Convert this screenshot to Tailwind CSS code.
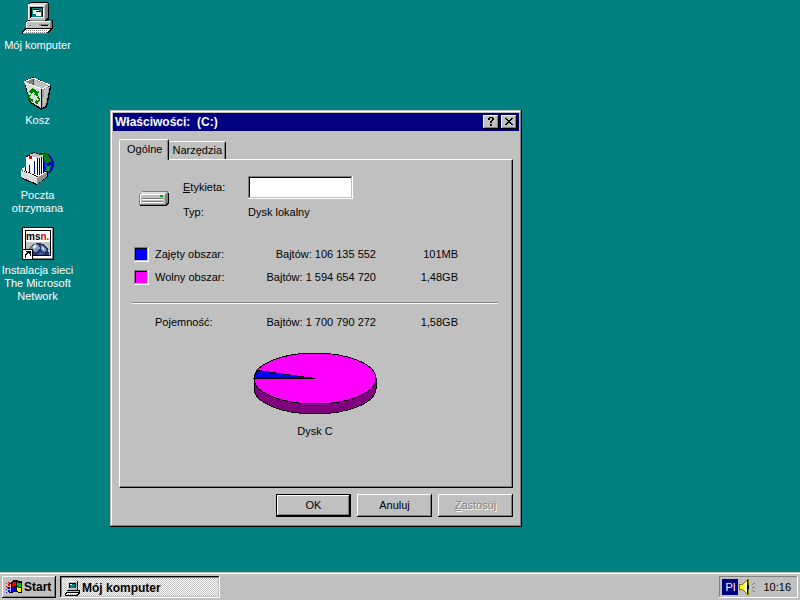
<!DOCTYPE html>
<html lang="pl">
<head>
  <meta charset="UTF-8">
  <meta name="viewport" content="width=device-width, initial-scale=1.0">
  <title>Właściwości: (C:)</title>
  <script src="https://cdn.jsdelivr.net/npm/@tailwindcss/browser@4"></script>
</head>
<body class="relative flex min-h-screen flex-col overflow-hidden bg-[#008080] font-['Liberation_Sans',Arial,sans-serif] text-[11px] leading-[13px] text-black">

  <!-- Desktop icons -->
  <main class="flex-1">
    <nav class="flex w-[75px] flex-col pt-[2px] text-center text-white">
      <a href="#" class="flex min-h-[75px] flex-col items-center gap-[4px]">
        <svg width="32" height="33" viewBox="0 0 32 33" shape-rendering="crispEdges" aria-hidden="true">
          <path d="M8 0h18v1h1v17h-2v1H6V2h1V1h1z" fill="#000"/>
          <path d="M8 1h17l-2 2H6V2h1z" fill="#dcdcdc"/>
          <path d="M6 3h17v15H6z" fill="#c0c0c0"/>
          <path d="M6 3h1v15H6zM6 3h17v1H6z" fill="#fff"/>
          <path d="M23 3l3-2v15l-3 2z" fill="#808080"/>
          <path d="M8 5h13v11H8z" fill="#000"/>
          <path d="M9 15h12V6h1v10H9z" fill="#fff"/>
          <path d="M10 6h10v9H10z" fill="#008080"/>
          <path d="M11 7h6v5h-6zM14 10h5v4h-5z" fill="#fff"/>
          <path d="M11 7h6v1h-6zM14 9h5v1h-5z" fill="#000080"/>
          <path d="M8 18h15v1H8z" fill="#808080"/>
          <path d="M4 19h26v-1h1v8l-2 2H4z" fill="#000"/>
          <path d="M5 20h23v7H5z" fill="#c0c0c0"/>
          <path d="M5 19h24v1H5v7H4v-7z" fill="#fff"/>
          <path d="M28 20h2v5l-2 2z" fill="#808080"/>
          <path d="M7 23h2v1H7z" fill="#00c000"/>
          <path d="M17 22h10v1H17z" fill="#808080"/>
          <path d="M19 23h7v1h-7z" fill="#000"/>
          <path d="M4 26h25v2l-3 4H0v-3z" fill="#000"/>
          <path d="M4 27h24l-3 4H1z" fill="#fff"/>
          <path d="M1 31h25v1H1z" fill="#808080"/>
          <path d="M4 28.500h22M4 30.500h21" stroke="#808080" stroke-dasharray="1 1"/>
        </svg>
        <span>Mój komputer</span>
      </a>
      <a href="#" class="flex min-h-[75px] flex-col items-center gap-[4px]">
        <svg width="32" height="33" viewBox="0 0 32 33" shape-rendering="crispEdges" aria-hidden="true">
          <path d="M2 4L11 0l18 8v3l-4 19-6 3-12-8z" fill="#000"/>
          <path d="M3 5l8-4 17 7-8 4z" fill="#808080"/>
          <path d="M11 2v7l9 3 6-4z" fill="#c0c0c0"/>
          <path d="M11 1v7" stroke="#404040" fill="none"/>
          <path d="M3 6l16 6v19L8 24z" fill="#dcdcdc"/>
          <path d="M20 12l8-3-4 20-4 2z" fill="#a0a0a0"/>
          <path d="M22 12l5-2-4 18-2 1z" fill="#c0c0c0"/>
          <path d="M2 5l9-4 17 7-8 4z" fill="none" stroke="#fff"/>
          <path d="M7 15l3-4 4 2 1 2 2-1-1 5-5-1 2-1-2-2-2 2zM5 17l4 1-1 1 1 3h2v3l-4-2-2-3zM17 18l1 5-2 3-1 1v1l-3-3 3-3v2l2-1-2-3z" fill="#008000"/>
        </svg>
        <span>Kosz</span>
      </a>
      <a href="#" class="flex min-h-[75px] flex-col items-center gap-[4px]">
        <svg width="34" height="33" viewBox="0 0 34 33" shape-rendering="crispEdges" aria-hidden="true">
          <circle cx="22" cy="12" r="11" fill="#000080"/>
          <circle cx="22" cy="12" r="10" fill="#0000e0"/>
          <path d="M19 2h6l4 4 2 5-3-1-2 2-4-3-3-3z" fill="#008000"/>
          <path d="M26 15l4-2-1 5-3 3-2-2z" fill="#00a040"/>
          <path d="M23 5l3 1 1 3-2-1zM24 12l3 2-2 2z" fill="#008080"/>
          <path d="M5 4l8-4 10 4v20L5 21z" fill="#000"/>
          <path d="M5 5l6-2v19l-6-2zM11 3l5 1v20l-5-2zM16 4l6-1v20l-6 1z" fill="#fff"/>
          <path d="M7 3l6-2 9 3-5 2z" fill="#c0c0c0"/>
          <path d="M8 4h3v4l-1-1H8z" fill="#e00000"/>
          <path d="M8.500 13v8M13.500 9v13" stroke="#0000a0" fill="none"/>
          <path d="M16.500 6v17M18.500 6v17M20.500 5v17M22.500 5v17" stroke="#000" fill="none"/>
          <path d="M0 18l4-3h1v4l13 6 7-6h2v6l-12 8L0 26z" fill="#000"/>
          <path d="M0 17l4-2v4l12 6 8-5h2l-10 7z" fill="#fff"/>
          <path d="M0 18l16 8v6L0 25z" fill="#dcdcdc"/>
          <path d="M16 26l10-6v5l-10 7z" fill="#909090"/>
        </svg>
        <span>Poczta<br>otrzymana</span>
      </a>
      <a href="#" class="flex min-h-[75px] flex-col items-center gap-[4px]">
        <svg width="32" height="33" viewBox="0 0 32 33" shape-rendering="crispEdges" aria-hidden="true">
          <path d="M0 0h32v33H0z" fill="#000"/>
          <path d="M1 1h29v30H1z" fill="#fff"/>
          <path d="M30 1h1v31H1v-1h29z" fill="#808080"/>
          <path d="M3 3h26v26H3z" fill="#000"/>
          <path d="M4 4h24v11H4z" fill="#fff"/>
          <path d="M4 15h24v13H4z" fill="#c0c0c0"/>
          <path d="M5 28l1-6 4-4 5-2h3l5 2 3 4 1 6z" fill="#203070"/>
          <path d="M8 21l4-4 5 1 1 3-4 4-4-1zM19 18l4 2 2 4-4 1-2-3z" fill="#8098b8"/>
          <path d="M12 18l3 1-2 3-2-1zM20 20l2 1v2l-2-1z" fill="#e0e8f0"/>
          <path d="M16 26l4-2 2 4h-6z" fill="#405090"/>
          <text x="4" y="13" font-family="Liberation Sans, Arial, sans-serif" font-size="10" font-weight="700">ms<tspan fill="#e00000">n.</tspan></text>
          <path d="M0 22h11v11H0z" fill="#000"/>
          <path d="M1 23h9v9H1z" fill="#fff"/>
          <path d="M4 24h5v5H8v-2H7v-1H6v1H5v1H4v3H3v-4h1v-1h1v-1H4z" fill="#000"/>
        </svg>
        <span>Instalacja sieci<br>The Microsoft<br>Network</span>
      </a>
    </nav>
  </main>

  <!-- Properties window -->
  <section role="dialog" aria-labelledby="title" class="absolute top-[110px] left-[110px] w-[412px] bg-[#c0c0c0] p-[3px] shadow-[inset_-1px_-1px_0_#000,inset_1px_1px_0_#c0c0c0,inset_-2px_-2px_0_#808080,inset_2px_2px_0_#fff]">
    <header class="flex h-[18px] items-center gap-[2px] bg-[#000080] px-[2px]">
      <h1 id="title" class="flex-1 text-[12px] font-bold text-white">Właściwości:&nbsp; (C:)</h1>
      <button type="button" aria-label="Pomoc" class="flex h-[14px] w-[16px] items-center justify-center bg-[#c0c0c0] shadow-[inset_-1px_-1px_0_#000,inset_1px_1px_0_#fff,inset_-2px_-2px_0_#808080]">
        <svg width="16" height="14" shape-rendering="crispEdges"><path d="M5 3h1V2h4v1h1v2h-1v1H9v2H7V6h1V5h1V3H7v2H5zM7 9h2v2H7z"/></svg>
      </button>
      <button type="button" aria-label="Zamknij" class="flex h-[14px] w-[16px] items-center justify-center bg-[#c0c0c0] shadow-[inset_-1px_-1px_0_#000,inset_1px_1px_0_#fff,inset_-2px_-2px_0_#808080]">
        <svg width="16" height="14" shape-rendering="crispEdges"><path d="M4 3h2v1h1v1h2V4h1V3h2v1h-1v1h-1v1H9v1h1v1h1v1h1v1h-2V9H9V8H7v1H6v1H4V9h1V8h1V7h1V6H6V5H5V4H4z"/></svg>
      </button>
    </header>

    <div class="px-[6px] pt-[8px] pb-[7px]">
      <div role="tablist" class="flex h-[20px] items-end">
        <button type="button" role="tab" aria-selected="true" class="relative z-10 -mb-px h-[21px] rounded-t-[2px] border-t border-r border-l border-t-white border-r-black border-l-white bg-[#c0c0c0] pr-[6px] pb-[2px] pl-[7px] shadow-[inset_-1px_0_0_#808080]">Ogólne</button>
        <button type="button" role="tab" aria-selected="false" class="h-[18px] rounded-t-[2px] border-t border-r border-t-white border-r-black px-[3px] shadow-[inset_-1px_0_0_#808080]">Narzędzia</button>
      </div>

      <div role="tabpanel" class="border border-t-white border-r-black border-b-black border-l-white pt-[16px] pr-[14px] pb-[49px] pl-[12px] shadow-[inset_-1px_-1px_0_#808080]">
        <div class="grid grid-cols-[51px_65px_1fr] items-center gap-y-[7px]">
          <svg class="row-span-2 ml-[7px]" width="30" height="19" viewBox="0 -3 30 19" shape-rendering="crispEdges" aria-hidden="true">
            <path d="M3 1h26v1h1v10l-3 3H1V4h1z" fill="#000"/>
            <path d="M3 1h25l-2 2H1z" fill="#dcdcdc"/>
            <path d="M3 0h26v1H3zM1 2h1v1H1zM0 3h1v11H0z" fill="#808080"/>
            <path d="M1 3h25v10H1z" fill="#c0c0c0"/>
            <path d="M1 3h25v1H2v9H1z" fill="#fff"/>
            <path d="M26 3l3-2v10l-3 3z" fill="#808080"/>
            <path d="M3 7h21v1H3zM3 10h21v1H3z" fill="#808080"/>
            <path d="M3 8h21v1H3zM3 11h21v1H3z" fill="#fff"/>
            <path d="M21 4h3v2h-3z" fill="#00a000"/>
            <path d="M1 13h25v1H1z" fill="#808080"/>
          </svg>
          <label for="label"><u>E</u>tykieta:</label>
          <input id="label" type="text" class="h-[23px] w-[105px] bg-white px-[4px] shadow-[inset_-1px_-1px_0_#fff,inset_1px_1px_0_#808080,inset_-2px_-2px_0_#c0c0c0,inset_2px_2px_0_#000] outline-none">
          <span>Typ:</span>
          <span>Dysk lokalny</span>
        </div>

        <table class="mt-[24px] w-full table-fixed">
          <colgroup>
            <col class="w-[23px]">
            <col class="w-[90px]">
            <col class="w-[131px]">
            <col class="w-[82px]">
            <col>
          </colgroup>
          <tbody>
            <tr class="h-[23px]">
              <td><div class="ml-[2px] size-[15px] bg-[#0000ff] shadow-[inset_-1px_-1px_0_#fff,inset_1px_1px_0_#808080,inset_-2px_-2px_0_#c0c0c0,inset_2px_2px_0_#000]"></div></td>
              <th scope="row" class="text-left font-normal">Zajęty obszar:</th>
              <td class="text-right">Bajtów: 106 135 552</td>
              <td class="text-right">101MB</td>
              <td></td>
            </tr>
            <tr class="h-[23px]">
              <td><div class="ml-[2px] size-[15px] bg-[#ff00ff] shadow-[inset_-1px_-1px_0_#fff,inset_1px_1px_0_#808080,inset_-2px_-2px_0_#c0c0c0,inset_2px_2px_0_#000]"></div></td>
              <th scope="row" class="text-left font-normal">Wolny obszar:</th>
              <td class="text-right">Bajtów: 1 594 654 720</td>
              <td class="text-right">1,48GB</td>
              <td></td>
            </tr>
            <tr>
              <td colspan="5" class="pt-[13px] pb-[7px]"><hr class="h-[2px] border-t border-b border-t-[#808080] border-b-white"></td>
            </tr>
            <tr class="h-[23px]">
              <td></td>
              <th scope="row" class="text-left font-normal">Pojemność:</th>
              <td class="text-right">Bajtów: 1 700 790 272</td>
              <td class="text-right">1,58GB</td>
              <td></td>
            </tr>
          </tbody>
        </table>

        <figure class="mt-[18px] flex flex-col items-center gap-[10px]">
          <svg width="124" height="63" viewBox="0 0 124 63" shape-rendering="crispEdges" role="img" aria-label="Wykres zajętości dysku">
            <path d="M1 26.500v10a61 25.500 0 0 0 122 0v-10z" fill="#800080" stroke="#000"/>
            <ellipse cx="62" cy="26.500" rx="61" ry="25.500" fill="#ff00ff" stroke="#000"/>
            <path d="M62 26.500L5 18.500Q1 22 1 26.500z" fill="#0000ff" stroke="#000" stroke-linejoin="bevel"/>
          </svg>
          <figcaption>Dysk C</figcaption>
        </figure>
      </div>

      <div class="mt-[6px] flex justify-end gap-[6px]">
        <button type="button" class="h-[23px] w-[75px] border border-black shadow-[inset_-1px_-1px_0_#000,inset_1px_1px_0_#fff,inset_-2px_-2px_0_#808080]">OK</button>
        <button type="button" class="h-[23px] w-[75px] shadow-[inset_-1px_-1px_0_#000,inset_1px_1px_0_#fff,inset_-2px_-2px_0_#808080]">Anuluj</button>
        <button type="button" disabled class="h-[23px] w-[75px] text-[#808080] shadow-[inset_-1px_-1px_0_#000,inset_1px_1px_0_#fff,inset_-2px_-2px_0_#808080] [text-shadow:1px_1px_0_#fff]"><u>Z</u>astosuj</button>
      </div>
    </div>
  </section>

  <!-- Taskbar -->
  <footer class="flex gap-[4px] border-t border-[#c0c0c0] bg-[#c0c0c0] px-[2px] pt-[3px] pb-[2px] shadow-[inset_0_1px_0_#fff]">
    <button type="button" class="flex h-[22px] w-[54px] items-center gap-[2px] pl-[4px] text-[12px] font-bold shadow-[inset_-1px_-1px_0_#000,inset_1px_1px_0_#fff,inset_-2px_-2px_0_#808080]">
      <svg width="16" height="14" viewBox="0 0 16 14" shape-rendering="crispEdges" aria-hidden="true">
        <path d="M5 2l3-2h3l2 1h3v12h-3l-2-1H8l-3 1z" fill="#000"/>
        <path d="M6 3l2-1h2v4H8L6 7z" fill="#ff0000"/>
        <path d="M11 2l1 1h3v4h-2l-2-1z" fill="#00c000"/>
        <path d="M6 8l2-1h2v4H8l-2 1z" fill="#0000ff"/>
        <path d="M11 7l2 1h2v4h-2l-2-1z" fill="#ffff00"/>
        <path d="M0 3h1v1H0zM2 2h2v1H2zM2 4h2v2H2zM0 6h1v1H0z" fill="#ff0000"/>
        <path d="M0 9h1v1H0zM2 8h2v1H2zM2 10h2v2H2zM0 12h1v1H0z" fill="#0000ff"/>
        <path d="M3 3h2v1H3zM1 7h3v1H1zM3 12h2v1H3z" fill="#000"/>
      </svg>
      Start
    </button>
    <button type="button" aria-pressed="true" class="flex h-[22px] w-[160px] items-center gap-[1px] bg-[repeating-conic-gradient(#fff_0_25%,#c0c0c0_0_50%)] bg-[length:2px_2px] pt-[2px] pl-[5px] text-[12px] font-bold shadow-[inset_-1px_-1px_0_#fff,inset_1px_1px_0_#000,inset_-2px_-2px_0_#c0c0c0,inset_2px_2px_0_#808080]">
      <svg width="16" height="15" viewBox="0 0 16 15" shape-rendering="crispEdges" aria-hidden="true">
        <path d="M2 0h11v9h2v3l-2 3H0v-2l2-3z" fill="#000"/>
        <path d="M2 0h10v9H2z" fill="#c0c0c0"/>
        <path d="M2 0h10v1H3v8H2z" fill="#fff"/>
        <path d="M4 2h7v5H4z" fill="#000"/>
        <path d="M5 3h5v4H5z" fill="#008080"/>
        <path d="M5 3h2v1H5z" fill="#fff"/>
        <path d="M2 10h12v1H2z" fill="#c0c0c0"/>
        <path d="M2 12h11l-1 2H1z" fill="#fff"/>
        <path d="M3 13.500h9" stroke="#808080" stroke-dasharray="1 1"/>
      </svg>
      Mój komputer
    </button>
    <div class="ml-auto flex h-[22px] items-center gap-[1px] pr-[7px] pl-[3px] shadow-[inset_-1px_-1px_0_#fff,inset_1px_1px_0_#808080]">
      <span class="flex size-[16px] items-center justify-center bg-[#000080] text-white">Pl</span>
      <svg width="17" height="16" viewBox="0 0 17 16" shape-rendering="crispEdges" aria-hidden="true">
        <path d="M0 5h3l5-5h2v16H8l-5-5H0z" fill="#808000"/>
        <path d="M1 6h3v4H1zM4 5l4-4v14l-4-4z" fill="#ffff00"/>
        <path d="M5 5l3-3v12l-3-3z" fill="#ffff80"/>
        <path d="M6 5l2-2v10l-2-2z" fill="#fff"/>
        <path d="M8 1h1v5h1v4H9v5H8z" fill="#000"/>
        <path d="M13 5h1v1h-1zM14 4h2v1h-2zM13 8h3v1h-3zM13 11h1v1h-1zM14 12h2v1h-2z" fill="#808080"/>
      </svg>
      <time class="ml-[6px]">10:16</time>
    </div>
  </footer>
</body>
</html>
